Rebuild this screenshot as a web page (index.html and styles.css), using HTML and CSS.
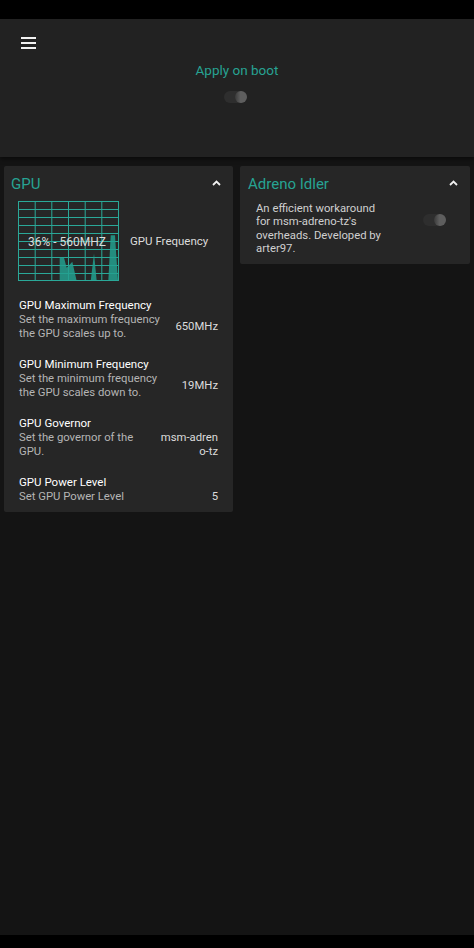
FILE: index.html
```html
<!DOCTYPE html>
<html>
<head>
<meta charset="utf-8">
<link rel="stylesheet" href="styles.css">
</head>
<body>
<div class="statusbar"></div>
<header class="header">
  <svg class="menu" width="15" height="12" viewBox="0 0 15 12"><rect x="0" y="0" width="15" height="2" fill="#f2f2f2"/><rect x="0" y="5" width="15" height="2" fill="#f2f2f2"/><rect x="0" y="10" width="15" height="2" fill="#f2f2f2"/></svg>
  <div class="boot-title">Apply on boot</div>
  <div class="switch boot-switch"><span class="thumb"></span></div>
</header>
<main class="content">
  <section class="card">
    <div class="card-head">
      <span class="card-title">GPU</span>
      <svg class="chev" width="9" height="6" viewBox="0 0 9 6"><path d="M1 5 L4.5 1.5 L8 5" fill="none" stroke="#f0f0f0" stroke-width="1.8"/></svg>
    </div>
    <div class="graph-row">
      <div class="graph">
        <svg width="101" height="80" viewBox="0 0 101 80">
          <g stroke="#2aa898" stroke-width="1" fill="none">
            <line x1="17.2" y1="0" x2="17.2" y2="80"/>
            <line x1="33.8" y1="0" x2="33.8" y2="80"/>
            <line x1="50.5" y1="0" x2="50.5" y2="80"/>
            <line x1="67.2" y1="0" x2="67.2" y2="80"/>
            <line x1="83.8" y1="0" x2="83.8" y2="80"/>
            <line x1="0" y1="8.5" x2="101" y2="8.5"/>
            <line x1="0" y1="16.5" x2="101" y2="16.5"/>
            <line x1="0" y1="24.5" x2="101" y2="24.5"/>
            <line x1="0" y1="32.5" x2="101" y2="32.5"/>
            <line x1="0" y1="40.5" x2="101" y2="40.5"/>
            <line x1="0" y1="48.5" x2="101" y2="48.5"/>
            <line x1="0" y1="56.5" x2="101" y2="56.5"/>
            <line x1="0" y1="64.5" x2="101" y2="64.5"/>
            <line x1="0" y1="72.5" x2="101" y2="72.5"/>
          </g>
          <g fill="#23a08f" fill-opacity="0.85">
            <polygon points="41.7,80 41.7,56.7 46,56.7 48.7,66.7 54.3,60.7 58.7,80"/>
            <polygon points="72.7,80 76,52.3 78.7,80"/>
            <polygon points="90.3,80 92.7,34.3 97,34.3 100,80"/>
          </g>
          <rect x="0.5" y="0.5" width="100" height="79" fill="none" stroke="#2aa898" stroke-width="1"/>
        </svg>
        <span class="graph-text">36% - 560MHZ</span>
      </div>
      <span class="graph-label">GPU Frequency</span>
    </div>
    <div class="item">
      <div class="item-title">GPU Maximum Frequency</div>
      <div class="item-row"><span class="item-desc">Set the maximum frequency the GPU scales up to.</span><span class="item-value">650MHz</span></div>
    </div>
    <div class="item">
      <div class="item-title">GPU Minimum Frequency</div>
      <div class="item-row"><span class="item-desc">Set the minimum frequency the GPU scales down to.</span><span class="item-value">19MHz</span></div>
    </div>
    <div class="item">
      <div class="item-title">GPU Governor</div>
      <div class="item-row"><span class="item-desc">Set the governor of the GPU.</span><span class="item-value">msm-adreno-tz</span></div>
    </div>
    <div class="item">
      <div class="item-title">GPU Power Level</div>
      <div class="item-row"><span class="item-desc">Set GPU Power Level</span><span class="item-value">5</span></div>
    </div>
  </section>
  <section class="card card-small">
    <div class="card-head">
      <span class="card-title">Adreno Idler</span>
      <svg class="chev" width="9" height="6" viewBox="0 0 9 6"><path d="M1 5 L4.5 1.5 L8 5" fill="none" stroke="#f0f0f0" stroke-width="1.8"/></svg>
    </div>
    <div class="idler-row">
      <span class="idler-desc">An efficient workaround for msm-adreno-tz's overheads. Developed by arter97.</span>
      <div class="switch idler-switch"><span class="thumb"></span></div>
    </div>
  </section>
</main>
<div class="navbar"></div>
</body>
</html>
```
FILE: styles.css
```css
* { box-sizing: border-box; }
html, body { margin: 0; padding: 0; }
body {
  width: 474px;
  height: 948px;
  background: #141414;
  font-family: Roboto, "Noto Sans", sans-serif;
  display: flex;
  flex-direction: column;
  overflow: hidden;
}
.statusbar { height: 19px; background: #000; flex: none; }
.header {
  height: 138px;
  background: #222222;
  flex: none;
  display: flex;
  flex-direction: column;
  padding-top: 18px;
  box-shadow: 0 2px 4px rgba(0,0,0,0.5);
  position: relative;
  z-index: 1;
}
.menu { margin-left: 21px; display: block; }
.boot-title {
  margin-top: 11px;
  text-align: center;
  color: #27a393;
  font-size: 13.5px;
  line-height: 20px;
}
.switch {
  width: 22px;
  height: 12px;
  border-radius: 6px;
  background: #2e2e2e;
  position: relative;
}
.thumb {
  position: absolute;
  right: -1px;
  top: 0;
  width: 12px;
  height: 12px;
  border-radius: 50%;
  background: linear-gradient(90deg, #3a3a3a 0%, #5e5e5e 45%, #5e5e5e 100%);
}
.boot-switch { margin: 11px auto 0; position: relative; left: -2px; }
.content {
  flex: 1;
  display: grid;
  grid-template-columns: 229px 230px;
  column-gap: 7px;
  align-items: start;
  padding: 9px 4px 0 4px;
}
.card {
  background: #262626;
  border-radius: 2px;
  padding-bottom: 0;
}
.card-small { padding-bottom: 8px; }
.card-head {
  height: 36px;
  display: flex;
  align-items: center;
  justify-content: space-between;
  padding: 0 12px 0 7px;
}
.card-small .card-head { padding-left: 8px; padding-right: 12px; }
.card-title {
  color: #27a393;
  font-size: 15px;
  line-height: 20px;
}
.chev { display: block; margin-top: -3px; }
.graph-row {
  display: flex;
  align-items: center;
  padding-left: 14px;
  margin-top: -1px;
  margin-bottom: 8px;
}
.graph {
  width: 101px;
  height: 80px;
  position: relative;
}
.graph svg { display: block; }
.graph-text {
  position: absolute;
  left: 0;
  right: 0;
  top: 33px;
  text-align: center;
  color: #dcdcdc;
  font-size: 12px;
  line-height: 16px;
  margin-left: -3px;
}
.graph-label {
  margin-left: 11px;
  color: #dcdcdc;
  font-size: 11.5px;
  line-height: 16px;
}
.item {
  padding: 8px 15px 8px 15px;
}
.item-title {
  color: #ffffff;
  font-size: 11.5px;
  font-weight: 400;
  line-height: 16px;
}
.item-row {
  display: flex;
  align-items: center;
}
.item-desc {
  flex: 1;
  color: #b5b5b5;
  font-size: 11.3px;
  line-height: 13.5px;
}
.item-value {
  width: 58px;
  flex: none;
  text-align: right;
  color: #dcdcdc;
  font-size: 11.3px;
  line-height: 13.5px;
  word-break: break-all;
}
.idler-row {
  display: flex;
  align-items: flex-start;
  padding-left: 16px;
}
.idler-desc {
  width: 130px;
  color: #d0d0d0;
  font-size: 11.3px;
  line-height: 13.4px;
}
.idler-switch { margin-left: 37px; margin-top: 12px; }
.navbar { height: 13px; background: #000; flex: none; }
```
